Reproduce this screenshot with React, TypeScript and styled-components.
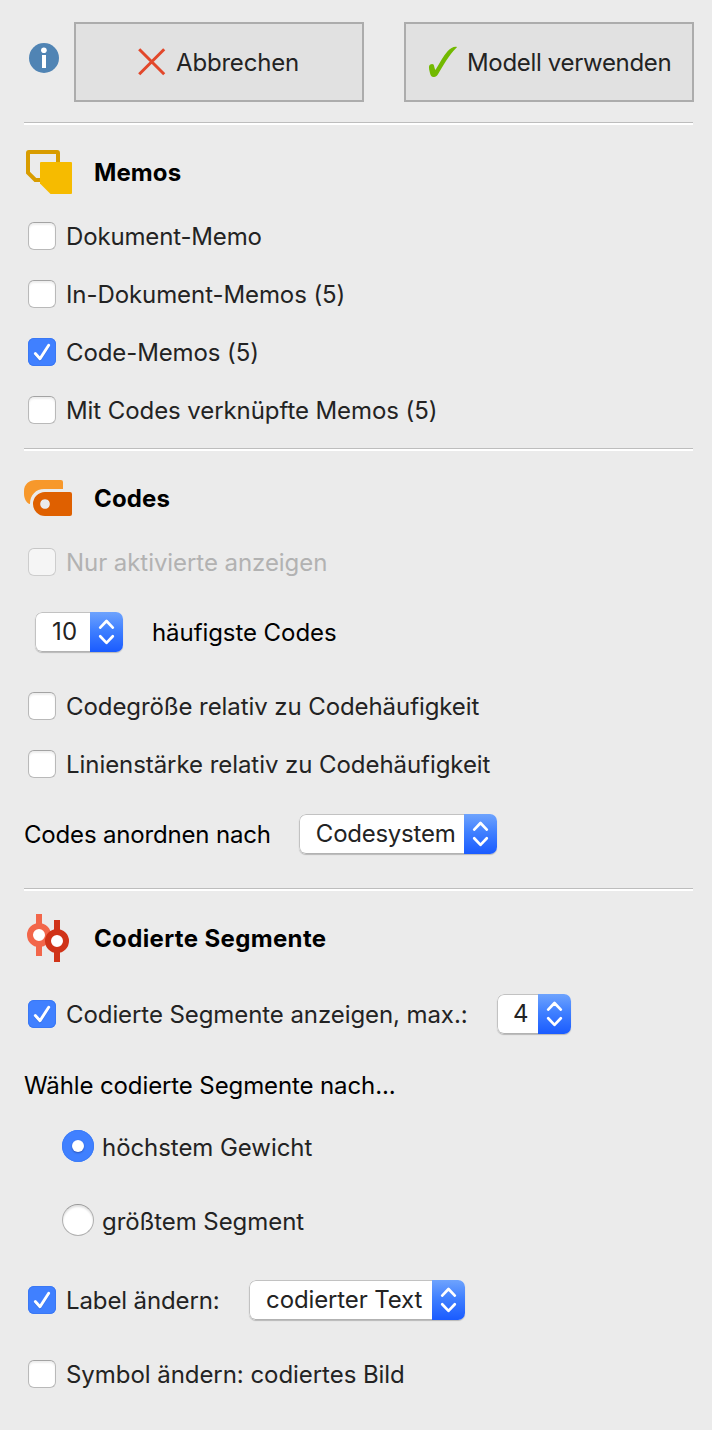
import React from "react";
import styled, { createGlobalStyle } from "styled-components";

const GlobalStyle = createGlobalStyle`
  * { box-sizing: border-box; }
  body {
    margin: 0;
    background: #ebebeb;
    font-family: Inter, "Liberation Sans", sans-serif;
    font-size: 24px;
    line-height: 30px;
    color: #232323;
  }
`;

const Panel = styled.main`
  width: 712px;
  height: 1430px;
  padding: 0 18px 0 24px;
  background: #ebebeb;
  overflow: hidden;
`;

const Toolbar = styled.header`
  display: flex;
  align-items: flex-start;
  height: 122px;
  padding-top: 22px;
`;

const InfoSlot = styled.div`
  flex: none;
  width: 50px;
  padding: 21px 0 0 5px;
  line-height: 0;
`;

const ActionButton = styled.button<{ $lead: number }>`
  flex: none;
  display: flex;
  align-items: center;
  width: 290px;
  height: 80px;
  padding: 0 0 0 ${(p) => p.$lead}px;
  border: 2px solid #acacac;
  border-radius: 0;
  background: #e1e1e1;
  color: inherit;
  font: inherit;
  & + & { margin-left: 40px; }
  svg { flex: none; margin-right: 8px; }
`;

const Section = styled.section<{ $end?: number }>`
  border-top: 1px solid #bdbdbd;
  box-shadow: inset 0 2px 0 #ffffff;
  padding: 2px 0 ${(p) => p.$end ?? 0}px;
  width: 669px;
`;

const SectionHead = styled.div`
  display: flex;
  align-items: center;
  height: 82px;
  padding-top: 12px;
  svg { flex: none; margin-right: 22px; }
`;

const Title = styled.h2<{ $track: number }>`
  margin: 0;
  padding-top: 2px;
  font-size: 24px;
  font-weight: 700;
  color: #000;
  white-space: nowrap;
  letter-spacing: ${(p) => p.$track}px;
`;

const Row = styled.div<{ $height?: number; $indent?: number; $after?: number; $shift?: number }>`
  display: flex;
  align-items: center;
  height: ${(p) => p.$height ?? 58}px;
  padding-left: ${(p) => p.$indent ?? 4}px;
  padding-top: ${(p) => p.$shift ?? 0}px;
  margin-bottom: ${(p) => p.$after ?? 0}px;
`;

const Text = styled.span<{ $track?: number; $tone?: string; $gap?: number; $drop?: number }>`
  color: ${(p) => p.$tone ?? "#232323"};
  letter-spacing: ${(p) => p.$track ?? 0}px;
  margin-left: ${(p) => p.$gap ?? 0}px;
  padding-top: ${(p) => p.$drop ?? 1}px;
  white-space: nowrap;
`;

const Box = styled.span<{ $on?: boolean; $off?: boolean }>`
  flex: none;
  display: block;
  width: 28px;
  height: 28px;
  margin-right: 10px;
  border-radius: 6px;
  line-height: 0;
  border: ${(p) => (p.$on ? "none" : `1px solid ${p.$off ? "#cdcdcd" : "#b9b9b9"}`)};
  border-top-color: ${(p) => (p.$off ? "#c6c6c6" : "#a3a3a3")};
  background: ${(p) => (p.$on ? "#4080ff" : p.$off ? "#f5f5f5" : "#ffffff")};
  box-shadow: ${(p) =>
    p.$on ? "inset 0 0 0 1px #3a78f4" : p.$off ? "none" : "inset 0 2px 2px rgba(0,0,0,0.07)"};
`;

const RadioDot = styled.span<{ $on?: boolean }>`
  flex: none;
  display: flex;
  align-items: center;
  justify-content: center;
  width: 32px;
  height: 32px;
  margin-right: 8px;
  border-radius: 50%;
  border: ${(p) => (p.$on ? "none" : "1px solid #b0b0b0")};
  border-top-color: #989898;
  background: ${(p) => (p.$on ? "#4080ff" : "#ffffff")};
  box-shadow: ${(p) =>
    p.$on ? "inset 0 0 0 1px #3c7cf8" : "inset 0 2px 2px rgba(0,0,0,0.12)"};
  &::after {
    content: "";
    display: ${(p) => (p.$on ? "block" : "none")};
    width: 12px;
    height: 12px;
    border-radius: 50%;
    background: #fff;
    box-shadow: 0 1px 2px rgba(0,0,60,0.35);
  }
`;

const Select = styled.div<{ $width: number; $gap: number }>`
  flex: none;
  display: flex;
  width: ${(p) => p.$width}px;
  height: 40px;
  margin-left: ${(p) => p.$gap}px;
  border-radius: 7px;
  background: #fff;
  overflow: hidden;
  box-shadow: 0 1px 1px rgba(0,0,0,0.22);
`;

const SelectValue = styled.span<{ $lead: number; $track: number }>`
  flex: 1;
  min-width: 0;
  padding: 4px 0 0 ${(p) => p.$lead}px;
  border: 1px solid #c2c2c2;
  border-right: 0;
  border-bottom-color: #b2b2b2;
  border-radius: 7px 0 0 7px;
  white-space: nowrap;
  letter-spacing: ${(p) => p.$track}px;
`;

const Stepper = styled.span`
  flex: none;
  width: 33px;
  line-height: 0;
  background: linear-gradient(#6ea3fd, #4080ff 45%, #1a5bff);
`;

function Check({ text, track, on, off }: { text: string; track: number; on?: boolean; off?: boolean }) {
  return (
    <>
      <Box $on={on} $off={off} role="checkbox" aria-checked={!!on} aria-disabled={!!off} aria-label={text}>
        {on && (
          <svg width="28" height="28" viewBox="0 0 28 28" fill="none">
            <path d="M7.3 15.7 L12 21 L20.7 7.3" stroke="#2d63cc" strokeOpacity=".45" strokeWidth="2.8" strokeLinecap="round" strokeLinejoin="round" transform="translate(0 1)" />
            <path d="M7.3 15.5 L12 20.7 L20.7 7.3" stroke="#fff" strokeWidth="2.9" strokeLinecap="round" strokeLinejoin="round" />
          </svg>
        )}
      </Box>
      <Text $track={track} $tone={off ? "#b2b2b2" : undefined}>{text}</Text>
    </>
  );
}

function Popup({ value, width, gap, lead, track }: { value: string; width: number; gap: number; lead: number; track: number }) {
  return (
    <Select $width={width} $gap={gap}>
      <SelectValue $lead={lead} $track={track}>{value}</SelectValue>
      <Stepper>
        <svg width="33" height="40" viewBox="0 0 33 40" fill="none" stroke="#fff" strokeWidth="2.7" strokeLinecap="round" strokeLinejoin="round">
          <path d="M10.2 15.6 L16.5 9 L22.8 15.6 M10.2 24.3 L16.5 30.9 L22.8 24.3" />
        </svg>
      </Stepper>
    </Select>
  );
}

export default function App() {
  return (
    <>
      <GlobalStyle />
      <Panel>
        <Toolbar>
          <InfoSlot>
            <svg width="30" height="30" viewBox="0 0 30 30">
              <circle cx="15" cy="15" r="15" fill="#5084b4" />
              <circle cx="14.9" cy="7.2" r="2.8" fill="#fff" />
              <path d="M13 12h4v13h-4z" fill="#fff" />
            </svg>
          </InfoSlot>
          <ActionButton $lead={60}>
            <svg width="32" height="32" viewBox="0 0 32 32" fill="none" stroke="#e2472a" strokeWidth="3">
              <path d="M3.2 3.2 L28.2 28.2 M28.2 3.2 L3.2 28.2" />
            </svg>
            <Text $track={-0.18}>Abbrechen</Text>
          </ActionButton>
          <ActionButton $lead={22}>
            <svg width="31" height="32" viewBox="0 0 31 32" fill="#72b900">
              <path d="M1.1 20 C1.6 18.2 4.6 17.1 5.5 18.6 C6.2 19.9 6.4 22 7.4 24 C11.5 17.5 15.4 9.8 19.8 5 C22.5 2 25.5 .3 28.4 .7 C29.2 .9 28.8 1.5 28.2 2.1 C21 8.8 15.5 19.5 10 28.3 C8.6 30.6 7.6 31 5.5 30.9 C3.4 30.9 2.7 29.5 2.1 27.4 C1.3 24.6 .7 22 1.1 20z" />
            </svg>
            <Text $track={-0.33}>Modell verwenden</Text>
          </ActionButton>
        </Toolbar>

        <Section $end={9}>
          <SectionHead>
            <svg width="48" height="48" viewBox="0 0 48 48">
              <path d="M16 31.9 H11.3 L4 24.6 V4.9 Q4 4 4.9 4 H33.1 Q34 4 34 4.9 V14" fill="none" stroke="#d89c00" strokeWidth="4" />
              <path d="M17 14 H47 Q48 14 48 15 V45 Q48 46 47 46 H26.5 L16 35.5 V15 Q16 14 17 14z" fill="#f6bb00" />
            </svg>
            <Title $track={0.1}>Memos</Title>
          </SectionHead>
          <Row><Check text="Dokument-Memo" track={-0.15} /></Row>
          <Row><Check text="In-Dokument-Memos (5)" track={-0.08} /></Row>
          <Row><Check text="Code-Memos (5)" track={-0.1} on /></Row>
          <Row><Check text="Mit Codes verknüpfte Memos (5)" track={-0.08} /></Row>
        </Section>

        <Section $end={13}>
          <SectionHead>
            <svg width="48" height="48" viewBox="0 0 48 48">
              <path d="M12 6 H37 Q39 6 39 8 V15 H20 C12 15 6 21 6 30 C3 29.5 0 25 0 20 V17 C0 10.5 5 6 12 6z" fill="#f7982b" />
              <path fillRule="evenodd" d="M21 18 H46 Q48 18 48 20 V40 Q48 42 46 42 H21 A12 12 0 0 1 21 18z M21 25.2 a4.8 4.8 0 1 0 .01 0z" fill="#df6000" />
            </svg>
            <Title $track={0.15}>Codes</Title>
          </SectionHead>
          <Row><Check text="Nur aktivierte anzeigen" track={-0.06} off /></Row>
          <Row $height={82} $after={4} $indent={11}>
            <Popup value="10" width={88} gap={0} lead={16} track={0.3} />
            <Text $tone="#000" $gap={29} $track={-0.07}>häufigste Codes</Text>
          </Row>
          <Row><Check text="Codegröße relativ zu Codehäufigkeit" track={-0.08} /></Row>
          <Row><Check text="Linienstärke relativ zu Codehäufigkeit" track={-0.06} /></Row>
          <Row $height={82} $indent={0}>
            <Text $tone="#000" $track={-0.17}>Codes anordnen nach</Text>
            <Popup value="Codesystem" width={198} gap={28} lead={16} track={-0.25} />
          </Row>
        </Section>

        <Section>
          <SectionHead>
            <svg width="48" height="48" viewBox="0 0 48 48">
              <path d="M12 0h6v42h-6z" fill="#f2664a" />
              <circle cx="15" cy="21" r="9" fill="#fff" stroke="#f2664a" strokeWidth="6" />
              <path d="M30 6h6v42h-6z" fill="#d03318" />
              <circle cx="33" cy="27" r="9" fill="#fff" stroke="#d03318" strokeWidth="6" />
            </svg>
            <Title $track={0.36}>Codierte Segmente</Title>
          </SectionHead>
          <Row $height={82}>
            <Check text="Codierte Segmente anzeigen, max.:" track={-0.08} on />
            <Popup value="4" width={74} gap={29.5} lead={15} track={0} />
          </Row>
          <Row $height={54} $shift={6} $indent={0}>
            <Text $tone="#000" $track={-0.11}>Wähle codierte Segmente nach...</Text>
          </Row>
          <Row $height={74} $indent={38}>
            <RadioDot $on /><Text $track={-0.06} $drop={3}>höchstem Gewicht</Text>
          </Row>
          <Row $height={74} $indent={38}>
            <RadioDot /><Text $track={-0.07} $drop={3}>größtem Segment</Text>
          </Row>
          <Row $height={86}>
            <Check text="Label ändern:" track={-0.12} on />
            <Popup value="codierter Text" width={216} gap={29.5} lead={16} track={-0.13} />
          </Row>
          <Row $height={62}><Check text="Symbol ändern: codiertes Bild" track={-0.05} /></Row>
        </Section>
      </Panel>
    </>
  );
}
